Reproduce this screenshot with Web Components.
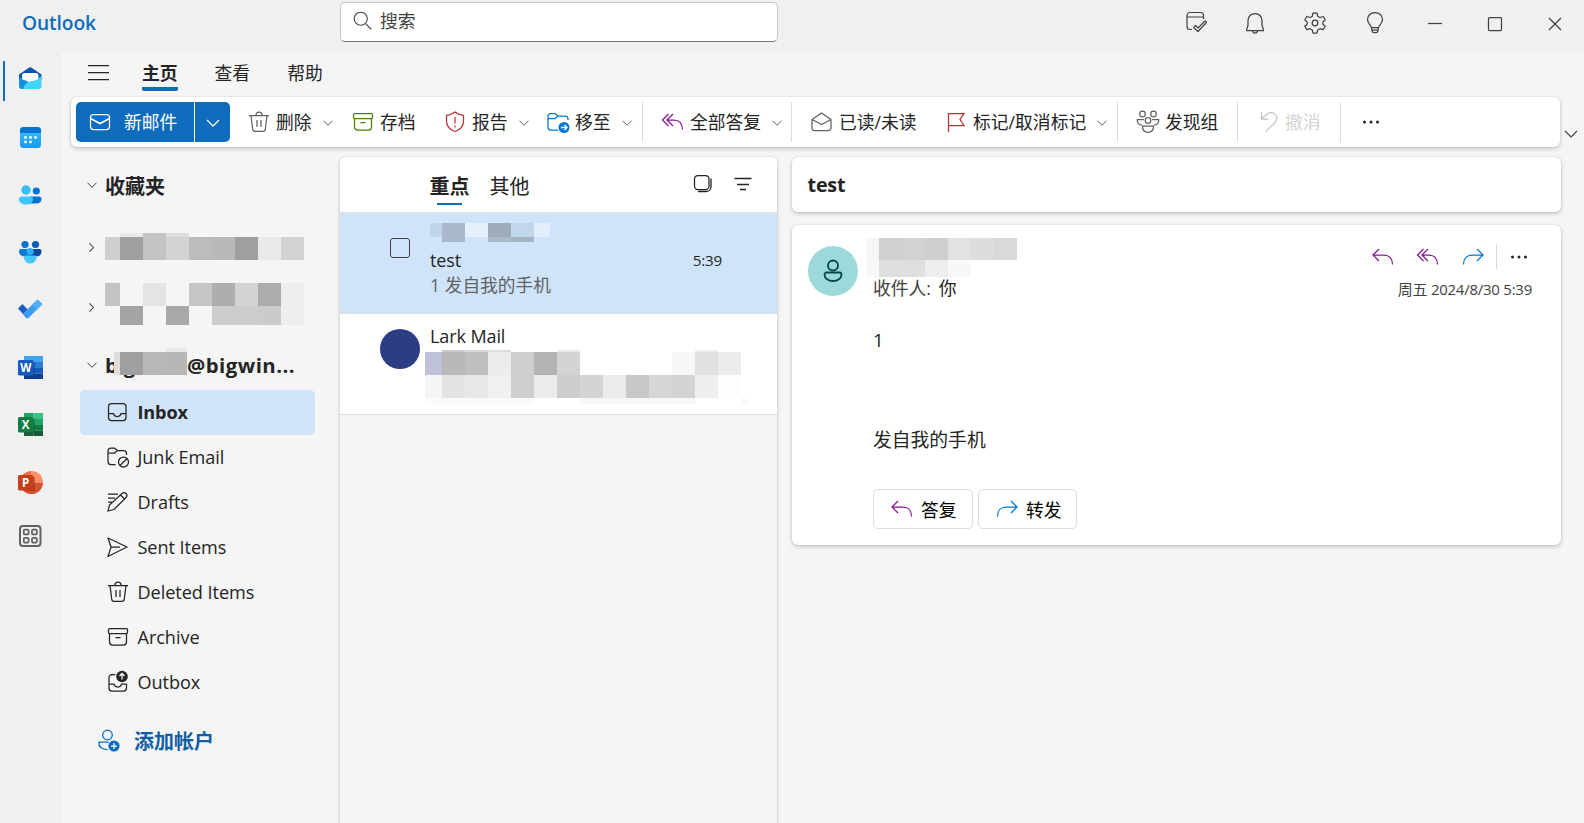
<!DOCTYPE html>
<html lang="zh-CN">
<head>
<meta charset="utf-8">
<title>Outlook</title>
<style>
  html, body { margin: 0; height: 100%; overflow: hidden; }
  body {
    font-family: "Open Sans", "Noto Sans CJK SC", sans-serif;
    font-size: 17.8px;
    color: #242424;
    --brand: #0f6cbd;
    --selected: #cfe4fb;
    --card-shadow: 0 0 2px rgba(0,0,0,.14), 0 2px 4px rgba(0,0,0,.18);
  }
</style>
</head>
<body>
<mail-app></mail-app>

<script>
(function () {
    // All icons share a 24x24 box; strokes use currentColor unless the glyph is multi-coloured
    const ICONS = {
        search: '<circle cx="10" cy="10" r="7.500"/><path d="M15.500 15.500l6.500 6.500"/>',
        menu: '<path d="M2 5.500h21M2 12.500h21M2 19.500h21"/>',
        day: '<path d="M9 18.500H7a3 3 0 0 1-3-3V4.500a3 3 0 0 1 3-3h10.500a3 3 0 0 1 3 3V8M4 6h16.500M11 16l1.500-1.500 2.500 2.500 6.500-6.500a1 1 0 0 1 1.500 1.500L15 20.500 11 17z" stroke-width="1.200" stroke-linejoin="round"/>',
        bell: '<path d="M12 2.500a7 7 0 0 0-7 7v5L3.700 18v1.500h16.600V18L19 14.500v-5a7 7 0 0 0-7-7zM9.500 19.500a2.500 2.500 0 0 0 5 0"/>',
        gear: '<path d="M10 2h4l.7 3.200 2.300 1.300 3.200-1 2 3.500-2.400 2v2l2.400 2.200-2 3.500-3.200-1-2.300 1.300L14 22h-4l-.7-3-2.300-1.300-3.200 1-2-3.500L4.200 13v-2L1.800 9l2-3.500 3.200 1 2.300-1.300z" stroke-linejoin="round"/><circle cx="12" cy="12" r="2.800"/>',
        bulb: '<path d="M8.500 16.500c-.3-2-4-4-4-8a7.500 7 0 0 1 15 0c0 4-3.700 6-4 8zM8.500 16.500l.7 4a1.500 1.500 0 0 0 1.300 1h3a1.500 1.500 0 0 0 1.300-1l.7-4M9 19h6"/>',
        min: '<path d="M5 12.500h14"/>',
        max: '<rect x="5.500" y="6.500" width="13" height="13" rx="1"/>',
        close: '<path d="M6 7l12 12M18 7L6 19"/>',
        mail: '<rect x="2.500" y="4.500" width="19" height="15" rx="3"/><path d="M2.500 8.500l9.500 5 9.500-5" stroke-width="1.600"/>',
        trash: '<path d="M2 5.500h20M9 5a3 3 0 0 1 6 0M4 5.500l1.700 13.500a2.500 2.500 0 0 0 2.500 2.300h7.600a2.500 2.500 0 0 0 2.500-2.300L20 5.500M10 10v7M14 10v7"/>',
        archive: '<rect x="2.500" y="3.500" width="19" height="5" rx="1.300"/><path d="M3.500 8.500v8.500a3 3 0 0 0 3 3h11a3 3 0 0 0 3-3V8.500M9.500 12.500h5"/>',
        shield: '<path d="M12 2c2.500 2 5 3 8.500 3.300V11c0 5-3 8.500-8.500 10.500C6.500 19.500 3.500 16 3.500 11V5.300C7 5 9.500 4 12 2zM12 7v6.500M12 15.500v2"/>',
        move: '<path d="M12 20H5a3 3 0 0 1-3-3V6.500a3 3 0 0 1 3-3h4l3 2.500h7a3 3 0 0 1 3 3v1M2 8.500h7L12 6"/><circle cx="18" cy="17.500" r="5.500" fill="currentColor" stroke="none"/><path d="M15 17.500h5.500M18.500 15l2.500 2.500-2.500 2.500" stroke="#fff" stroke-width="1.400"/>',
        reply: '<path d="M8 4L2 10l6 6M2.500 10H13c5 0 8.500 3.500 8.500 9.500"/>',
        replyall: '<path d="M7.500 4L1.500 10l6 6M12 4l-6 6 6 6M6.500 10H13c5 0 8.500 3.500 8.500 9.500"/>',
        forward: '<path d="M16 4l6 6-6 6M21.500 10H11c-5 0-8.500 3.500-8.500 9.500"/>',
        read: '<path d="M2 9.500L11.500 3 21 9.500V18a2.500 2.500 0 0 1-2.500 2.500h-14A2.500 2.500 0 0 1 2 18zM2 9.500l9.500 5L21 9.500" stroke-linejoin="round"/>',
        flag: '<path d="M4.500 22V3.500H20l-4 6 4 6H4.500"/>',
        group: '<circle cx="6.500" cy="4" r="2.800"/><circle cx="17.500" cy="4" r="2.800"/><circle cx="12" cy="10.500" r="2.800"/><path d="M8 9.500H1.300c-.3 3.500 1.500 5.500 4.700 5.500M16 9.500h6.700c.3 3.500-1.500 5.500-4.700 5.500M6.500 16h11c1 8.500-12 8.500-11 0z"/>',
        undo: '<path d="M5.500 2v7h7M6 8.500l5.500-4.700c6-3.500 12.500 2.700 7.500 8.700L9.500 21.500"/>',
        dots: '<g fill="currentColor" stroke="none"><circle cx="5.500" cy="12" r="1.500"/><circle cx="12" cy="12" r="1.500"/><circle cx="18.500" cy="12" r="1.500"/></g>',
        down: '<path d="M3 7.500l9 9 9-9"/>',
        right: '<path d="M7.500 3l9 9-9 9"/>',
        inbox: '<rect x="2.500" y="3.500" width="17.500" height="17" rx="3"/><path d="M2.500 13.500h5c.5 4 7 4 7.500 0h5"/>',
        junk: '<path d="M9.500 19.500H5a3 3 0 0 1-3-3V6a3 3 0 0 1 3-3h3.500L11.500 5.500h6a3 3 0 0 1 3 3V10M2 8h6.500l3-2.500"/><circle cx="17.500" cy="17" r="5"/><path d="M14 20.500l7-7"/>',
        drafts: '<path d="M2 21l1.500-6L16 3.500c3-2.500 6.500 1 4 4L8 19.500zM14.500 5l4.500 4.500M2 4h10M2 8h7M2 12h4"/>',
        send: '<path d="M2 3L21 12 2 21.500 5 12zM5 12h9" stroke-linejoin="round"/>',
        outbox: '<path d="M9.500 4.500H6a3 3 0 0 0-3 3V18a3 3 0 0 0 3 3h11.500a3 3 0 0 0 3-3v-4M3 14h5c.5 4 7 4 7.500 0h5"/><circle cx="16" cy="6.500" r="5.800" fill="currentColor" stroke="none"/><path d="M16 9.500V4M13.500 6L16 3.500 18.500 6" stroke="#fff"/>',
        adduser: '<circle cx="11.500" cy="7" r="4.800"/><path d="M11.500 21.500c-5 0-9-2-8.500-7.500h9.500"/><circle cx="18" cy="18" r="5.600" fill="currentColor" stroke="none"/><path d="M15 18h6M18 15v6" stroke="#fff"/>',
        select: '<rect x="3.500" y="3.500" width="14.500" height="14" rx="3.500"/><path d="M20 6.500V15a5 5 0 0 1-5 4.500H7" stroke-width="1.300"/>',
        filter: '<path d="M3.500 6.500h17M6 12.500h12M9 17.500h6" stroke-width="1.500"/>',
        person: '<circle cx="12" cy="6.500" r="5"/><path d="M5.500 13.500h13a2 2 0 0 1 2 2c0 4-4 6.500-8.500 6.500s-8.500-2.500-8.500-6.500a2 2 0 0 1 2-2z"/>'
    };

    // Coloured application icons for the left rail, 26x26
    const APPS = {
        mail: '<path d="M2 8.500L11.500 2a3 3 0 0 1 3.500 0l9.500 6.500V14H2z" fill="#0b53b0"/><path d="M5 9.500C5 8 6 7 7.500 7h11.500c1.500 0 2.500 1 2.500 2.500v6H5z" fill="#f7fbff"/><path d="M2 9c0 3 4 5 8 6l6 6-3 2H5a3 3 0 0 1-3-3z" fill="#1490df"/><path d="M24.500 9v11a3 3 0 0 1-3 3H6.500c.5-4 2.500-6.500 7-7.500 5.500-1 9-2.500 11-6.500z" fill="#41d3f8"/>',
        calendar: '<defs><linearGradient id="c" x2="0" y2="1"><stop stop-color="#3cc4fd"/><stop offset="1" stop-color="#1499ef"/></linearGradient></defs><rect x="3" y="3" width="21" height="21" rx="3.500" fill="url(#c)"/><path d="M3 9V6.500A3.500 3.500 0 0 1 6.500 3h14A3.500 3.500 0 0 1 24 6.500V9z" fill="#0873cf"/><g fill="#fff"><circle cx="8.500" cy="13.500" r="1.400"/><circle cx="13.500" cy="13.500" r="1.400"/><circle cx="18.500" cy="13.500" r="1.400"/><circle cx="8.500" cy="18" r="1.400"/><circle cx="13.500" cy="18" r="1.400"/></g>',
        people: '<g transform="translate(0 1)"><circle cx="9" cy="7" r="4.700" fill="#36bff9"/><circle cx="19.300" cy="8" r="3.600" fill="#0874d1"/><path d="M13 13.500h9a2.500 2.500 0 0 1 2.500 2.500c0 3-2 4.500-6 4.500H13z" fill="#0874d1"/><path d="M4.500 13.500h9A2.500 2.500 0 0 1 16 16c0 3.500-2.500 5.500-7 5.500S2 19.500 2 16a2.500 2.500 0 0 1 2.500-2.500z" fill="#3dc6fd"/></g>',
        groups: '<circle cx="8" cy="5.500" r="3.600" fill="#0870cd"/><circle cx="18.500" cy="5.500" r="3.600" fill="#075db7"/><path d="M4 10h9v7.500H8c-4.500 0-6-2.500-6-5.500a2 2 0 0 1 2-2z" fill="#087ad4"/><path d="M13 10h9.500a2 2 0 0 1 2 2c0 4-2 5.500-6 5.500H13z" fill="#064b9e"/><circle cx="13.200" cy="12.500" r="3.500" fill="#2aafff"/><path d="M9 16.500h8.500c2 0 2.500 1.500 2 3-1 3-3 5-6.300 5s-5.200-2-6.200-5c-.5-1.500 0-3 2-3z" fill="#43c9ff"/>',
        todo: '<path d="M1 11.500L5.500 7l7.500 8-3 6.500z" fill="#1c5bbe"/><path d="M6 16.500L20.500 2.500 25.500 7 11 21.500z" fill="#3d9cf0"/><path d="M15 8l5.500-5.500 5 4.500-5.500 5.500z" fill="#51aff5"/>',
        word: '<path d="M7 2h19v6H7z" fill="#41a5ee"/><path d="M7 8h19v6H7z" fill="#2b7cd3"/><path d="M7 14h19v5.500H7z" fill="#185abd"/><path d="M7 19.500h19V25H7z" fill="#103f91"/><path d="M9 8h9v14H9z" fill="#123f80" opacity=".5"/><rect x="1" y="6" width="15.500" height="15.500" rx="1.500" fill="#185abd"/><text x="8.700" y="17.800" fill="#fff">W</text>',
        excel: '<path d="M7 2h9.500v6H7z" fill="#21a366"/><path d="M16.500 2H26v6h-9.500z" fill="#33c481"/><path d="M7 8h9.500v6H7z" fill="#107c41"/><path d="M16.500 8H26v6h-9.500z" fill="#21a366"/><path d="M7 14h9.500v11H7z" fill="#185c37"/><path d="M16.500 14H26v5.500h-9.500z" fill="#107c41"/><path d="M16.500 19.500H26V25h-9.500z" fill="#185c37"/><path d="M9 8h9v14H9z" fill="#0b4a28" opacity=".5"/><rect x="1" y="6" width="15.500" height="15.500" rx="1.500" fill="#107c41"/><text x="8.700" y="17.800" fill="#fff">X</text>',
        ppt: '<path d="M14.500 2A11.500 11.500 0 0 0 3 13.500h11.500z" fill="#ed6c47"/><path d="M14.500 2A11.500 11.500 0 0 1 26 13.500H14.500z" fill="#ff8f6b"/><path d="M3 13.500a11.500 11.500 0 0 0 23 0z" fill="#d35230"/><path d="M9 8h9v14H9z" fill="#8c2b10" opacity=".5"/><rect x="1" y="6" width="15.500" height="15.500" rx="1.500" fill="#c43e1c"/><text x="8.700" y="17.800" fill="#fff">P</text>',
        apps: '<g fill="none" stroke="#616161" stroke-width="2"><rect x="3" y="3" width="20.500" height="20" rx="3"/><g stroke-width="1.700"><rect x="6.800" y="6.600" width="4.800" height="4.800" rx="1"/><rect x="15" y="6.600" width="4.800" height="4.800" rx="1"/><rect x="6.800" y="14.800" width="4.800" height="4.800" rx="1"/><rect x="15" y="14.800" width="4.800" height="4.800" rx="1"/></g></g>'
    };

    class FluentIcon extends HTMLElement {
        connectedCallback() {
            const root = this.attachShadow({ mode: 'open' });
            const size = this.getAttribute('size') || 24;
            const weight = this.getAttribute('weight') || 1.25;
            root.innerHTML = `
      <style>
        :host { display: inline-block; flex: none; line-height: 0; }
      </style>
      <svg width="${size}" height="${size}" viewBox="0 0 24 24" fill="none" stroke="currentColor" stroke-width="${weight}">${ICONS[this.getAttribute('name')]}</svg>
    `;
        }
    }

    class AppIcon extends HTMLElement {
        connectedCallback() {
            this.attachShadow({ mode: 'open' }).innerHTML = `
      <style>
        :host { display: block; height: 26px; flex: none; }
        svg { display: block; }
        text { font: bold 11.5px "Open Sans", sans-serif; text-anchor: middle; }
      </style>
      <svg width="26" height="26" viewBox="0 0 26 26">${APPS[this.getAttribute('name')]}</svg>
    `;
        }
    }

    // Blocks that cover private text. cells: "x y w h colour; ..."
    class PixelMask extends HTMLElement {
        connectedCallback() {
            const rects = this.getAttribute('cells').split(';').map(cell => {
                const [x, y, w, h, fill] = cell.trim().split(' ');
                return `<rect x="${x}" y="${y}" width="${w}" height="${h}" fill="#${fill}"/>`;
            }).join('');
            this.attachShadow({ mode: 'open' }).innerHTML = `
      <style>
        :host { display: block; flex: none; }
        svg { display: block; }
      </style>
      <svg width="${this.getAttribute('w')}" height="${this.getAttribute('h')}" shape-rendering="crispEdges">${rects}</svg>
    `;
        }
    }

    class TitleBar extends HTMLElement {
        constructor() {
            super();
            this.attachShadow({ mode: 'open' }).innerHTML = `
      <style>
        :host { display: flex; height: 52px; background: #f0f0f0; }
        .brand { width: 318px; padding-left: 22px; font-size: 19.2px; font-weight: 600; line-height: 46px; color: var(--brand); letter-spacing: -.1px; }
        .search {
          display: flex; box-sizing: border-box; width: 438px; height: 40px; margin-top: 2px; padding: 4px 0 0 11px;
          background: #fff; border: 1px solid #c8c8c8; border-bottom: 1.5px solid #757575; border-radius: 5px; color: #424242;
        }
        .search fluent-icon { margin-top: 3px; }
        .search span { margin-left: 7px; line-height: 29px; }
        .buttons { display: flex; margin-left: auto; padding: 11px 17px 0 0; gap: 36px; color: #424242; }
      </style>
      <div class="brand">Outlook</div>
      <div class="search"><fluent-icon name="search" size="21"></fluent-icon><span>搜索</span></div>
      <div class="buttons">
        <fluent-icon name="day"></fluent-icon>
        <fluent-icon name="bell"></fluent-icon>
        <fluent-icon name="gear"></fluent-icon>
        <fluent-icon name="bulb"></fluent-icon>
        <fluent-icon name="min"></fluent-icon>
        <fluent-icon name="max"></fluent-icon>
        <fluent-icon name="close"></fluent-icon>
      </div>
    `;
        }
    }

    class AppRail extends HTMLElement {
        constructor() {
            super();
            this.attachShadow({ mode: 'open' }).innerHTML = `
      <style>
        :host { display: flex; flex-direction: column; gap: 31.4px; background: #f0f0f0; padding-left: 17px; padding-top: 14px; }
        .active { display: flex; align-items: center; height: 40px; margin: -5px 0 -8px -14px; border-left: 2px solid var(--brand); padding-left: 12px; }
        app-icon:last-child { margin-top: -3.5px; }
      </style>
      <div class="active"><app-icon name="mail"></app-icon></div>
      <app-icon name="calendar"></app-icon>
      <app-icon name="people"></app-icon>
      <app-icon name="groups"></app-icon>
      <app-icon name="todo"></app-icon>
      <app-icon name="word"></app-icon>
      <app-icon name="excel"></app-icon>
      <app-icon name="ppt"></app-icon>
      <app-icon name="apps"></app-icon>
    `;
        }
    }

    class RibbonTabs extends HTMLElement {
        constructor() {
            super();
            this.attachShadow({ mode: 'open' }).innerHTML = `
      <style>
        :host { display: flex; height: 45px; padding-left: 25px; }
        fluent-icon { margin-top: 8px; }
        span { margin-left: 37px; line-height: 42px; height: 35px; }
        .on { margin-left: 32px; font-weight: 700; border-bottom: 4px solid var(--brand); border-radius: 2px; }
      </style>
      <fluent-icon name="menu"></fluent-icon>
      <span class="on">主页</span><span>查看</span><span>帮助</span>
    `;
        }
    }

    class ToolItem extends HTMLElement {
        connectedCallback() {
            const tint = this.getAttribute('tint') || '#616161';
            this.attachShadow({ mode: 'open' }).innerHTML = `
      <style>
        :host { display: flex; align-items: center; flex: none; height: 40px; white-space: nowrap; }
        .icon { color: ${tint}; }
        .label { margin-left: 5px; line-height: 40px; }
        .chevron { margin: 1px 0 0 10px; color: #616161; }
      </style>
      <fluent-icon class="icon" name="${this.getAttribute('icon')}"></fluent-icon>
      <span class="label"><slot></slot></span>
      ${this.hasAttribute('menu') ? '<fluent-icon class="chevron" name="down" size="12" weight="2"></fluent-icon>' : ''}
    `;
        }
    }

    class RibbonBar extends HTMLElement {
        constructor() {
            super();
            this.attachShadow({ mode: 'open' }).innerHTML = `
      <style>
        :host { display: flex; height: 50px; padding-left: 10px; }
        .bar { display: flex; box-sizing: border-box; align-items: center; width: 1489px; padding-left: 5px; background: #fff; border-radius: 6px; box-shadow: var(--card-shadow); }
        .new { display: flex; height: 40px; margin-right: 17px; color: #fff; gap: 1px; line-height: 40px; }
        .new div { display: flex; align-items: center; background: var(--brand); }
        .new .main { box-sizing: border-box; width: 118px; padding-left: 12px; border-radius: 5px 0 0 5px; }
        .new .main span { margin-left: 12px; }
        .new .more { box-sizing: border-box; width: 35px; padding: 2px 0 0 10px; border-radius: 0 5px 5px 0; }
        hr { width: 1px; height: 40px; margin: 0; border: 0; background: #dcdcdc; flex: none; }
        .collapse { margin: 29px 0 0 3px; color: #424242; }
        .off { color: #d4d4d4; }
      </style>
      <div class="bar">
        <div class="new">
          <div class="main"><fluent-icon name="mail"></fluent-icon><span>新邮件</span></div>
          <div class="more"><fluent-icon name="down" size="16" weight="1.9"></fluent-icon></div>
        </div>
        <tool-item icon="trash" menu style="width:104px">删除</tool-item>
        <tool-item icon="archive" tint="#498205" style="width:92px">存档</tool-item>
        <tool-item icon="shield" tint="#bc2f32" menu style="width:103px">报告</tool-item>
        <tool-item icon="move" tint="#0078d4" menu style="width:96px">移至</tool-item>
        <hr>
        <tool-item icon="replyall" tint="#881798" menu style="width:130px;margin-left:18px">全部答复</tool-item>
        <hr>
        <tool-item icon="read" style="width:134px;margin-left:18px">已读/未读</tool-item>
        <tool-item icon="flag" tint="#bc2f32" menu style="width:173px">标记/取消标记</tool-item>
        <hr>
        <tool-item icon="group" style="width:101px;margin-left:18px">发现组</tool-item>
        <hr>
        <tool-item class="off" icon="undo" tint="#c4c4c4" style="width:84px;margin-left:18px">撤消</tool-item>
        <hr>
        <fluent-icon name="dots" style="margin-left:18px"></fluent-icon>
      </div>
      <fluent-icon class="collapse" name="down" size="16" weight="1.7"></fluent-icon>
    `;
        }
    }

    class FolderItem extends HTMLElement {
        connectedCallback() {
            this.attachShadow({ mode: 'open' }).innerHTML = `
      <style>
        :host { display: flex; box-sizing: border-box; align-items: center; width: 235px; height: 45px; margin-left: 19px; padding: 0 0 2px 25.5px; border-radius: 5px; font-size: 18.1px; letter-spacing: -.05px; }
        :host([selected]) { background: var(--selected); font-weight: 700; letter-spacing: -.15px; }
        span { margin-left: 8px; }
      </style>
      <fluent-icon name="${this.getAttribute('icon')}"></fluent-icon>
      <span><slot></slot></span>
    `;
        }
    }

    class FolderPane extends HTMLElement {
        constructor() {
            super();
            this.attachShadow({ mode: 'open' }).innerHTML = `
      <style>
        :host { display: block; width: 279px; flex: none; }
        .group { display: flex; box-sizing: border-box; align-items: center; height: 60px; padding-left: 25px; font-size: 20px; font-weight: 700; }
        .group > fluent-icon { width: 12px; margin-right: 7px; color: #424242; }
        .fav { padding-bottom: 4px; }
        .account { position: relative; height: 56px; font-size: 20.4px; letter-spacing: .45px; }
        .hidden { width: 82px; letter-spacing: -.2px; }
        .account pixel-mask { position: absolute; left: 52px; top: 11px; }
        .add { display: flex; align-items: center; margin: 10px 0 0 35px; height: 50px; font-size: 20px; font-weight: 700; color: #115ea3; }
        .add fluent-icon { color: var(--brand); margin-right: 14px; }
      </style>
      <div class="group fav"><fluent-icon name="down" size="12" weight="2"></fluent-icon>收藏夹</div>
      <div class="group"><fluent-icon name="right" size="11" weight="2.200"></fluent-icon>
        <pixel-mask w="199" h="30" cells="0 5 15 23 cfcfcf;15 1 23 4 e9e9e9;15 5 23 23 9f9f9f;38 1 23 27 c4c4c4;61 1 23 4 dddddd;61 5 23 23 d3d3d3;84 5 23 23 bcbcbc;107 5 23 23 b9b9b9;130 5 23 23 9f9f9f;153 5 23 23 e9e9e9;176 5 23 23 d2d2d2"></pixel-mask>
      </div>
      <div class="group"><fluent-icon name="right" size="11" weight="2.200"></fluent-icon>
        <pixel-mask w="199" h="48" cells="0 0 15 23 c4c4c4;15 23 23 19 a5a5a5;38 0 23 23 e4e4e4;61 23 23 19 a8a8a8;84 0 23 23 c5c5c5;107 0 23 23 aeaeae;107 23 46 19 cdcdcd;130 0 23 23 d3d3d3;153 0 23 23 acacac;153 23 23 19 cbcbcb;176 0 23 42 eeeeee"></pixel-mask>
      </div>
      <div class="group account"><fluent-icon name="down" size="12" weight="2"></fluent-icon><span class="hidden">big</span>@bigwin...
        <pixel-mask w="74" h="27" cells="1 4 6 23 dedede;7 4 23 23 9f9f9f;30 4 23 23 b8b8b8;53 0 21 4 e9e9e9;53 4 21 23 b7b7b7"></pixel-mask>
      </div>
      <folder-item icon="inbox" selected style="margin-top:-3px">Inbox</folder-item>
      <folder-item icon="junk">Junk Email</folder-item>
      <folder-item icon="drafts">Drafts</folder-item>
      <folder-item icon="send">Sent Items</folder-item>
      <folder-item icon="trash">Deleted Items</folder-item>
      <folder-item icon="archive">Archive</folder-item>
      <folder-item icon="outbox">Outbox</folder-item>
      <div class="add"><fluent-icon name="adduser"></fluent-icon>添加帐户</div>
    `;
        }
    }

    class MessageList extends HTMLElement {
        constructor() {
            super();
            this.attachShadow({ mode: 'open' }).innerHTML = `
      <style>
        :host { display: block; width: 437px; flex: none; height: 680px; border-radius: 6px 6px 0 0; box-shadow: var(--card-shadow); }
        header { display: flex; height: 55px; padding-left: 89.5px; background: #fff; border-radius: 6px 6px 0 0; border-bottom: 1px solid #e0e0e0; font-size: 20px; }
        header span { line-height: 59px; margin-right: 20px; }
        header .on { display: flex; flex-direction: column; align-items: center; font-weight: 700; }
        header .on::after { content: ""; width: 25px; height: 2px; margin-top: -13px; background: var(--brand); }
        .tools { display: flex; gap: 16px; margin: 15px 22.5px 0 auto; }
        .row { display: flex; height: 100px; background: #fff; border-bottom: 1px solid #dfdfdf; }
        .row.on { background: var(--selected); }
        .check { box-sizing: border-box; width: 20px; height: 20px; margin: 25px 20px 0 50px; border: 1px solid #424242; border-radius: 3px; }
        .text { flex: 1; padding-top: 6px; line-height: 25px; font-size: 18px; }
        .line { display: flex; justify-content: space-between; padding-right: 55px; letter-spacing: -.1px; }
        .time { font-size: 15.2px; letter-spacing: -.2px; }
        .preview { color: #616161; font-size: 17.7px; }
        .avatar { width: 40px; height: 40px; margin: 15px 10px 0 40px; border-radius: 50%; background: #2c3c85; }
        .lark pixel-mask { margin: 1px 0 0 -5px; }
      </style>
      <header>
        <span class="on">重点</span><span>其他</span>
        <div class="tools"><fluent-icon name="select"></fluent-icon><fluent-icon name="filter"></fluent-icon></div>
      </header>
      <div class="row on">
        <div class="check"></div>
        <div class="text">
          <pixel-mask w="120" h="29" cells="0 4 12 14 c0d5ec;12 4 23 19 abb9ce;35 4 23 14 e6f0fd;58 4 23 14 9dabbb;58 18 23 5 abb9c8;81 4 23 14 c1d6ea;81 18 23 5 a5b4c4;104 4 16 14 e2eefd"></pixel-mask>
          <div class="line"><span>test</span><span class="time">5:39</span></div>
          <div class="preview">1 发自我的手机</div>
        </div>
      </div>
      <div class="row lark">
        <div class="avatar"></div>
        <div class="text" style="padding-top:10px">
          <div class="line">Lark Mail</div>
          <pixel-mask w="323" h="54" cells="17 0 23 2 c9c9c9;40 0 23 2 d8d8d8;63 0 23 2 dcdcdc;132 0 23 2 eaeaea;270 0 23 2 ededed;0 2 17 23 bdc2da;17 2 23 23 b9b9b9;40 2 23 23 bfbfbf;63 2 23 23 ececec;86 2 23 23 cecece;109 2 23 23 b4b4b4;132 2 23 23 d3d3d3;247 2 23 23 f7f7f7;270 2 23 23 e1e1e1;293 2 23 23 ececec;0 25 17 23 f5f5f5;17 25 23 23 e3e3e3;40 25 23 23 e7e7e7;63 25 23 23 f1f1f1;86 25 23 23 cecece;109 25 23 23 ebebeb;132 25 23 23 cdcdcd;155 25 23 23 d4d4d4;178 25 23 23 ebebeb;201 25 23 23 c8c8c8;224 25 23 23 d6d6d6;247 25 23 23 d3d3d3;270 25 23 23 efefef;293 25 23 23 fdfdfd;0 48 109 6 fafafa;155 48 115 6 f7f7f7;316 48 7 6 fafafa"></pixel-mask>
        </div>
      </div>
    `;
        }
    }

    class ReadingPane extends HTMLElement {
        constructor() {
            super();
            this.attachShadow({ mode: 'open' }).innerHTML = `
      <style>
        :host { display: flex; flex-direction: column; width: 769px; margin-left: 15px; gap: 13px; }
        .card { background: #fff; border-radius: 6px; box-shadow: var(--card-shadow); }
        .subject { height: 55px; padding-left: 15.5px; line-height: 55px; font-size: 19.8px; font-weight: 700; letter-spacing: -.2px; }
        .message { display: flex; height: 320px; }
        .avatar { display: grid; place-items: center; width: 50px; height: 50px; margin: 21px 0 0 16px; border-radius: 50%; background: #9cd9da; color: #03484e; flex: none; }
        .sender { display: flex; justify-content: space-between; height: 64px; }
        .content { flex: 1; padding: 13px 29px 0 8px; }
        .to { margin: -2px 0 0 7px; line-height: 26px; color: #424242; }
        .to b { font-weight: 400; margin-left: 3px; color: #242424; }
        .side { display: flex; flex-direction: column; align-items: flex-end; padding-top: 2px; }
        .actions { display: flex; align-items: center; height: 37px; color: #881798; margin-right: 1px; }
        .actions hr { width: 1px; height: 25px; margin: 0 10px 0 11px; border: 0; background: #d9d9d9; }
        .date { font-size: 15px; line-height: 33px; margin-bottom: -4px; color: #424242; letter-spacing: -.25px; }
        .body { margin-left: 7px; padding-top: 26px; line-height: 25px; font-size: 18.8px; }
        .body p { margin: 0; height: 100px; }
        .buttons { display: flex; gap: 5px; margin: -39px 0 0 7px; color: #000; }
        button { display: flex; align-items: center; box-sizing: border-box; width: 100px; height: 40px; padding: 0 0 0 16px; gap: 7px; border: 1px solid #dcdcdc; border-radius: 5px; background: #fff; font: inherit; color: #000; white-space: nowrap; }
        button + button { width: 99px; }
        button fluent-icon { color: #881798; }
        .blue { color: #0078d4; }
      </style>
      <div class="card subject">test</div>
      <div class="card message">
        <div class="avatar"><fluent-icon name="person" weight="1.800"></fluent-icon></div>
        <div class="content">
          <div class="sender">
            <div>
              <pixel-mask w="152" h="39" cells="0 0 13 22 f6f6f6;13 0 23 22 d0d0d0;36 0 23 22 d2d2d2;59 0 23 22 cfcfcf;82 0 23 22 e2e2e2;105 0 23 22 dddddd;128 0 23 22 d9d9d9;0 22 13 17 f7f7f7;13 22 46 17 dfdfdf;59 22 23 17 ededed;82 22 23 17 f8f8f8"></pixel-mask>
              <div class="to">收件人: <b>你</b></div>
            </div>
            <div class="side">
              <div class="actions">
                <fluent-icon name="reply"></fluent-icon>
                <fluent-icon name="replyall" style="margin-left:21px"></fluent-icon>
                <fluent-icon name="forward" class="blue" style="margin-left:21px"></fluent-icon>
                <hr>
                <fluent-icon name="dots" style="color:#242424"></fluent-icon>
              </div>
              <div class="date">周五 2024/8/30 5:39</div>
            </div>
          </div>
          <div class="body"><p>1</p><p>发自我的手机</p></div>
          <div class="buttons">
            <button><fluent-icon name="reply"></fluent-icon>答复</button>
            <button><fluent-icon name="forward" class="blue"></fluent-icon>转发</button>
          </div>
        </div>
      </div>
    `;
        }
    }

    class MailApp extends HTMLElement {
        constructor() {
            super();
            this.attachShadow({ mode: 'open' }).innerHTML = `
      <style>
        :host { display: grid; grid-template: 52px 1fr / 61px 1fr; height: 100vh; background: #f5f5f5; overflow: hidden; }
        title-bar { grid-column: 1 / 3; }
        main { min-width: 0; min-height: 0; }
        .panes { display: flex; align-items: flex-start; margin-top: 10px; }
      </style>
      <title-bar></title-bar>
      <app-rail></app-rail>
      <main>
        <ribbon-tabs></ribbon-tabs>
        <ribbon-bar></ribbon-bar>
        <div class="panes">
          <folder-pane></folder-pane>
          <message-list></message-list>
          <reading-pane></reading-pane>
        </div>
      </main>
    `;
        }
    }

    customElements.define('fluent-icon', FluentIcon);
    customElements.define('app-icon', AppIcon);
    customElements.define('pixel-mask', PixelMask);
    customElements.define('title-bar', TitleBar);
    customElements.define('app-rail', AppRail);
    customElements.define('ribbon-tabs', RibbonTabs);
    customElements.define('tool-item', ToolItem);
    customElements.define('ribbon-bar', RibbonBar);
    customElements.define('folder-item', FolderItem);
    customElements.define('folder-pane', FolderPane);
    customElements.define('message-list', MessageList);
    customElements.define('reading-pane', ReadingPane);
    customElements.define('mail-app', MailApp);
})();
</script>
</body>
</html>
